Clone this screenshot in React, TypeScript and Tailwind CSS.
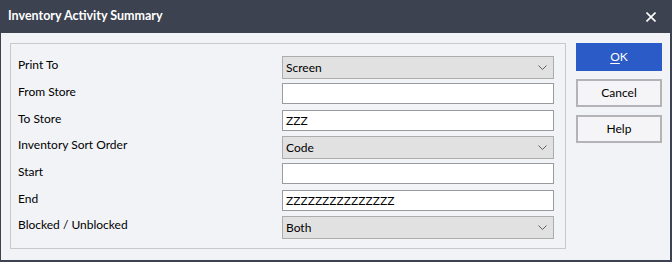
const font = "font-['Lato','Noto_Sans',sans-serif]";

const Chevron = () => (
  <svg width="9" height="5" viewBox="0 0 9 5" className="shrink-0">
    <path d="M0.5 0.5 L4.5 4.5 L8.5 0.5" fill="none" stroke="#606060" strokeWidth="1" />
  </svg>
);

const Select = ({ value }: { value: string }) => (
  <div className="mt-[2px] flex h-[23px] w-[272px] items-center justify-between border border-[#adadad] bg-[#e1e1e1] pl-[3px] pr-[6px] text-[12px] text-black">
    <span>{value}</span>
    <Chevron />
  </div>
);

const Field = ({ value }: { value?: string }) => (
  <div className="mt-[2px] flex h-[21px] w-[272px] items-center border border-[#9a9ba0] bg-white pl-[3px] text-[12px] text-black">
    {value}
  </div>
);

const rows: { label: string; kind: "select" | "input"; value?: string; h: string }[] = [
  { label: "Print To", kind: "select", value: "Screen", h: "h-[27px]" },
  { label: "From Store", kind: "input", h: "h-[27px]" },
  { label: "To Store", kind: "input", value: "ZZZ", h: "h-[26px]" },
  { label: "Inventory Sort Order", kind: "select", value: "Code", h: "h-[27px]" },
  { label: "Start", kind: "input", h: "h-[27px]" },
  { label: "End", kind: "input", value: "ZZZZZZZZZZZZZZZ", h: "h-[26px]" },
  { label: "Blocked / Unblocked", kind: "select", value: "Both", h: "h-[27px]" },
];

export default function App() {
  return (
    <div className={`flex h-[262px] w-[672px] flex-col bg-[#3c4250] ${font}`}>
      <div className="flex h-[33px] shrink-0 items-center justify-between pl-[8px] pr-[16px]">
        <span className="text-[12.5px] font-bold text-white">Inventory Activity Summary</span>
        <svg width="10" height="10" viewBox="0 0 10 10">
          <path d="M0.5 0.5 L9.5 9.5 M9.5 0.5 L0.5 9.5" stroke="white" strokeWidth="1.6" />
        </svg>
      </div>
      <div className="mb-[2px] ml-[1px] mr-[2px] flex flex-1 gap-[10px] bg-[#f2f3f7] pb-[11px] pl-[9px] pr-[8px] pt-[10px]">
        <div className="flex flex-1 flex-col border border-[#c8c9cc] pl-[7px] pr-[11px] pt-[10px]">
          {rows.map((r) => (
            <div key={r.label} className={`flex items-start justify-between ${r.h}`}>
              <span className="mt-[1px] text-[12px] leading-[20px] text-black">{r.label}</span>
              {r.kind === "select" ? <Select value={r.value!} /> : <Field value={r.value} />}
            </div>
          ))}
        </div>
        <div className="flex w-[86px] flex-col gap-[8px]">
          <button className="h-[28px] bg-[#2a5bc7] text-[12px] text-white">
            <span className="underline underline-offset-2">O</span>K
          </button>
          <button className="h-[28px] border-2 border-[#b4b4b8] bg-[#f5f5f7] text-[12px] text-black">Cancel</button>
          <button className="h-[28px] border-2 border-[#b4b4b8] bg-[#f5f5f7] text-[12px] text-black">Help</button>
        </div>
      </div>
    </div>
  );
}
